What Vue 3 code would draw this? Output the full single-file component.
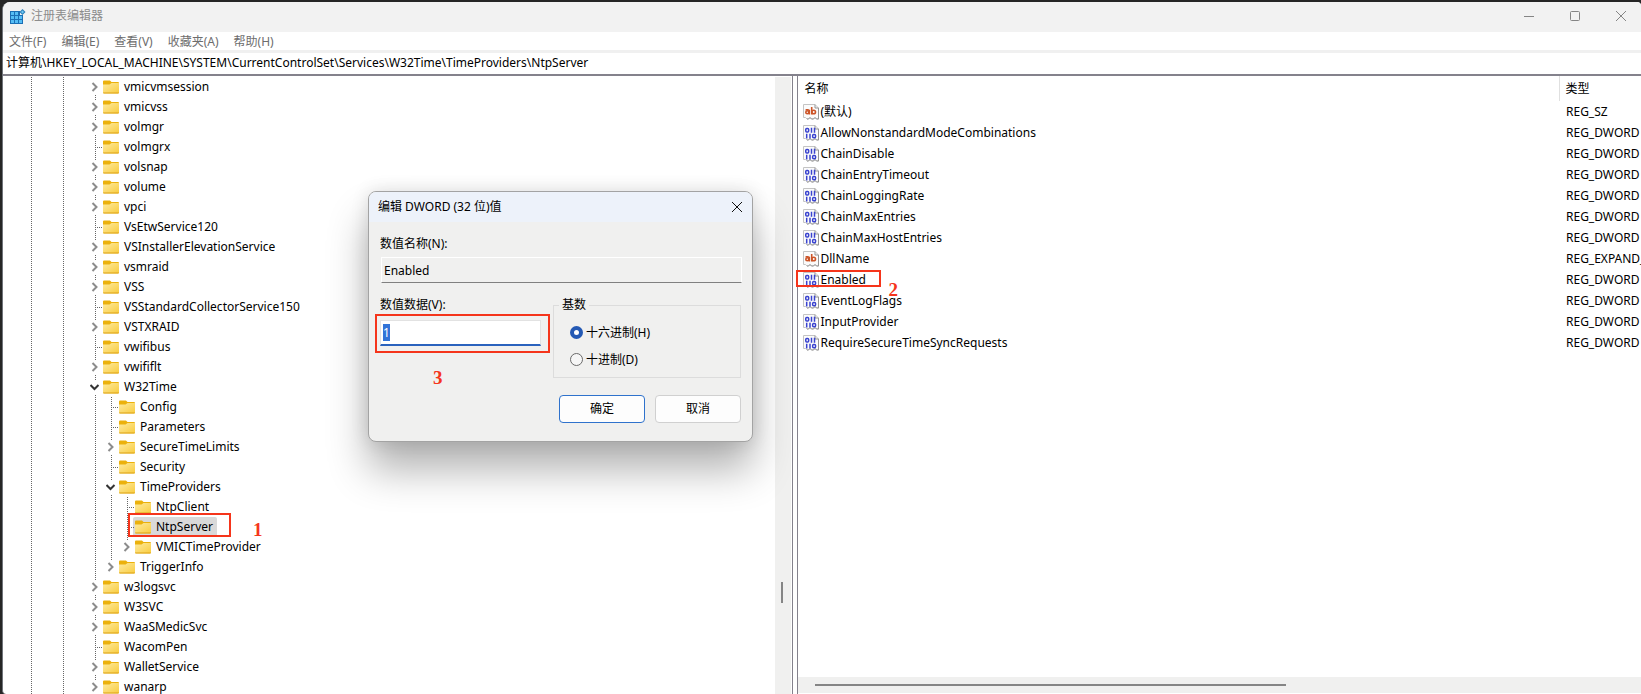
<script setup>
import { ref, onMounted } from 'vue'

const menus = ['文件(F)', '编辑(E)', '查看(V)', '收藏夹(A)', '帮助(H)']
const path = ref('计算机\\HKEY_LOCAL_MACHINE\\SYSTEM\\CurrentControlSet\\Services\\W32Time\\TimeProviders\\NtpServer')

// state: c = collapsed, o = open, '' = leaf
const n = (name, state = 'c', level = 0, extra = {}) => ({ name, state, level, ...extra })
const tree = [
  n('vmicvmsession'), n('vmicvss'), n('volmgr'), n('volmgrx', ''), n('volsnap'), n('volume'), n('vpci'),
  n('VsEtwService120', ''), n('VSInstallerElevationService'), n('vsmraid'), n('VSS'),
  n('VSStandardCollectorService150', ''), n('VSTXRAID'), n('vwifibus', ''), n('vwififlt'),
  n('W32Time', 'o'),
  n('Config', '', 1), n('Parameters', '', 1), n('SecureTimeLimits', 'c', 1), n('Security', '', 1),
  n('TimeProviders', 'o', 1),
  n('NtpClient', '', 2), n('NtpServer', '', 2, { selected: true }), n('VMICTimeProvider', 'c', 2, { last: true }),
  n('TriggerInfo', 'c', 1, { last: true }),
  n('w3logsvc'), n('W3SVC'), n('WaaSMedicSvc'), n('WacomPen', ''), n('WalletService'), n('wanarp')
]

const values = [
  ['(默认)', 'REG_SZ'],
  ['AllowNonstandardModeCombinations', 'REG_DWORD'],
  ['ChainDisable', 'REG_DWORD'],
  ['ChainEntryTimeout', 'REG_DWORD'],
  ['ChainLoggingRate', 'REG_DWORD'],
  ['ChainMaxEntries', 'REG_DWORD'],
  ['ChainMaxHostEntries', 'REG_DWORD'],
  ['DllName', 'REG_EXPAND_SZ'],
  ['Enabled', 'REG_DWORD'],
  ['EventLogFlags', 'REG_DWORD'],
  ['InputProvider', 'REG_DWORD'],
  ['RequireSecureTimeSyncRequests', 'REG_DWORD']
]

const data = ref('1')
const base = ref('hex')
const dataInput = ref(null)
onMounted(() => {
  dataInput.value.focus()
  dataInput.value.select()
})
</script>

<template>
  <div class="desktop">
    <main class="window">
      <header class="titlebar">
        <svg class="app-icon" width="16" height="16" viewBox="0 0 16 16" aria-hidden="true">
          <path d="M0 2h10v4h3v9H0z" fill="#1b6fb5" />
          <path d="M1 3h3v3H1zM5 3h3v3H5zM1 7h3v3H1zM5 7h3v3H5zM9 7h3v3H9zM1 11h3v3H1zM5 11h3v3H5zM9 11h3v3H9z" fill="#55bdf5" />
          <path d="M12.500 0L15.500 3L12.500 6L9.500 3z" fill="#2b7fb8" />
          <path d="M12.500 1.500L14 3L12.500 4.500L11 3z" fill="#6cc8f5" />
        </svg>
        <h1>注册表编辑器</h1>
        <div class="controls">
          <button aria-label="最小化"><svg width="10" height="10" viewBox="0 0 10 10"><path d="M0 5.500h10" /></svg></button>
          <button aria-label="最大化"><svg width="10" height="10" viewBox="0 0 10 10"><rect x=".5" y=".5" width="9" height="9" rx="1" /></svg></button>
          <button aria-label="关闭"><svg width="10" height="10" viewBox="0 0 10 10"><path d="M0 0l10 10M10 0L0 10" /></svg></button>
        </div>
      </header>
      <nav class="menubar">
        <button v-for="m in menus" :key="m">{{ m }}</button>
      </nav>
      <div class="address"><input v-model="path" aria-label="地址" /></div>

      <div class="panes">
        <section class="tree-pane">
          <ul class="tree">
            <li v-for="t in tree" :key="t.name">
              <span class="cell line"></span><span class="cell"></span><span class="cell line"></span><span class="cell"></span>
              <span v-for="i in t.level" :key="i" class="cell line"></span>
              <span v-if="!t.state" class="cell line leaf"></span>
              <span v-else class="cell branch" :class="{ last: t.last, first: t.name === 'vmicvmsession' }">
                <button class="toggle" :aria-label="t.name" :aria-expanded="t.state === 'o'">
                  <svg v-if="t.state === 'c'" width="10" height="10" viewBox="0 0 10 10"><path d="M2.500 1l4 4-4 4" stroke="#8c8c8c" /></svg>
                  <svg v-else width="10" height="10" viewBox="0 0 10 10"><path d="M.5 3l4 4 4-4" stroke="#333" /></svg>
                </button>
              </span>
              <span class="node" :class="{ selected: t.selected }">
                <svg class="folder" width="16" height="14" viewBox="0 0 16 14" aria-hidden="true">
                  <defs>
                    <linearGradient id="fold" x1="0" y1="0" x2="1" y2="1">
                      <stop offset="0" stop-color="#fdeaa0" /><stop offset="1" stop-color="#f9cc3e" />
                    </linearGradient>
                  </defs>
                  <path d="M0 1.500Q0 .5 1 .5h6l1.500 1.500H15q1 0 1 1V8H0z" fill="#ebb10c" />
                  <path d="M0 4.500h6.500L8.500 3H16v9.500q0 1-1 1H1q-1 0-1-1z" fill="url(#fold)" />
                  <path d="M0 12.500q0 1 1 1h14q1 0 1-1z" fill="#dba216" />
                </svg>
                <span>{{ t.name }}</span>
              </span>
              <span v-if="t.selected" class="mark mark-key"></span>
              <b v-if="t.selected" class="num num-key">1</b>
            </li>
          </ul>
          <div class="vscroll"><span class="vthumb"></span></div>
        </section>

        <section class="value-pane">
          <table>
            <thead>
              <tr><th class="name-col">名称</th><th class="type-col">类型</th></tr>
            </thead>
            <tbody>
              <tr v-for="v in values" :key="v[0]">
                <td>
                  <div class="value">
                    <svg width="16" height="16" viewBox="0 0 16 16" aria-hidden="true">
                      <path d="M.5.5h11.500l3.500 3.500v11h-2l-1.500-1.500-1.500 1.500H8.500L7 13.500 5.500 15H4l-1.500-1.500H.5z" fill="#fbfbfb" stroke="#c4c4c4" />
                      <path d="M12 .5V4h3.500M15.500 4v11h-2l-1.500-1.500-1.500 1.500H8.500L7 13.500 5.500 15H4" fill="none" stroke="#959595" />
                      <g v-if="v[1] !== 'REG_DWORD'" fill="none" stroke="#cc5427" stroke-width="1.600">
                        <circle cx="4.300" cy="8.300" r="1.500" /><path d="M6.300 6v4.500M2.600 5.800h2.200q1.500 0 1.500 1.500M8.700 3v7.500" /><circle cx="10.700" cy="8" r="1.800" />
                      </g>
                      <g v-else fill="none" stroke="#3a43cf" stroke-width="1.500">
                        <rect x="2.750" y="3.550" width="2.900" height="3.400" rx="1" /><path d="M8.500 2.800v4.900M11.500 2.800v4.900M3.700 8.800v4.700M7 8.800v4.700" /><rect x="9.650" y="9.550" width="2.900" height="3.200" rx="1" />
                      </g>
                    </svg>
                    <span>{{ v[0] }}</span>
                    <span v-if="v[0] === 'Enabled'" class="mark mark-value"></span>
                    <b v-if="v[0] === 'Enabled'" class="num num-value">2</b>
                  </div>
                </td>
                <td class="type">{{ v[1] }}</td>
              </tr>
            </tbody>
          </table>
          <div class="hscroll"><span class="hthumb"></span></div>
        </section>
      </div>
    </main>

    <form class="dialog" role="dialog" aria-labelledby="dlg-title" @submit.prevent>
      <header>
        <h2 id="dlg-title">编辑 DWORD (32 位)值</h2>
        <button type="button" class="close" aria-label="关闭"><svg width="10" height="10" viewBox="0 0 10 10"><path d="M0 0l10 10M10 0L0 10" /></svg></button>
      </header>
      <div class="body">
        <label for="vname">数值名称(N):</label>
        <input id="vname" class="field readonly" value="Enabled" readonly />
        <div class="columns">
          <div class="data">
            <label for="vdata">数值数据(V):</label>
            <div class="data-box">
              <input id="vdata" ref="dataInput" v-model="data" class="field" />
              <span class="mark mark-data"></span>
            </div>
            <b class="num num-data">3</b>
          </div>
          <fieldset>
            <legend>基数</legend>
            <label class="radio"><input v-model="base" type="radio" name="base" value="hex" />十六进制(H)</label>
            <label class="radio"><input v-model="base" type="radio" name="base" value="dec" />十进制(D)</label>
          </fieldset>
        </div>
        <div class="actions">
          <button class="primary">确定</button>
          <button type="button">取消</button>
        </div>
      </div>
    </form>
  </div>
</template>

<style>
html, body, #app { height: 100%; }
body { margin: 0; overflow: hidden; }
</style>

<style scoped>
* { box-sizing: border-box; }
.desktop {
  position: relative;
  height: 100%;
  padding: 2px 0 0 2px;
  background: #262626;
  overflow: hidden;
  font: 12px/20px "Noto Sans", "Noto Sans CJK SC", sans-serif;
  color: #000;
}
button, input { font: inherit; color: inherit; }
.window {
  display: flex;
  flex-direction: column;
  height: 100%;
  background: #fff;
  border-left: 1px solid #70747a;
  border-radius: 8px 4px 0 4px;
  overflow: hidden;
}
.titlebar {
  display: flex;
  flex: none;
  align-items: center;
  height: 30px;
  padding-left: 7px;
  background: #f2f2f2;
  color: #8c8c8c;
}
.titlebar h1 { margin: 0 0 2px 5px; font-size: 12px; font-weight: 400; }
.app-icon { display: block; }
.controls { display: flex; margin: 0 -3px 2px auto; }
.controls button, .close {
  display: grid;
  place-items: center;
  width: 46px;
  height: 28px;
  padding: 0;
  border: 0;
  background: none;
}
.controls svg, .close svg { fill: none; stroke: #858585; }
.close svg { stroke: #111; }
.menubar { display: flex; flex: none; height: 18px; padding-left: 6px; gap: 15px; }
.menubar button { height: 20px; padding: 0; border: 0; background: none; line-height: 20px; color: #6d6d6d; }
.address { flex: none; height: 26px; border-top: 3px solid #f0f0f0; border-bottom: 2px solid #84828c; }
.address input { display: block; width: 100%; height: 20px; padding: 0 3px; border: 0; outline: 0; background: none; }

.panes { display: flex; flex: 1; min-height: 0; }
.tree-pane { display: flex; flex: 0 0 48.2%; min-width: 0; padding-top: 1px; border-right: 1px solid #84828c; }
.tree { flex: 1; margin: 0; padding: 0 0 0 20px; list-style: none; overflow: hidden; }
.tree li { position: relative; display: flex; height: 20px; }
.cell { position: relative; flex: none; width: 16px; height: 20px; }
.line { background: repeating-linear-gradient(#666 0 1px, transparent 1px 2px) 8px 0 / 1px 100% no-repeat; }
.leaf {
  background:
    repeating-linear-gradient(#666 0 1px, transparent 1px 2px) 8px 0 / 1px 100% no-repeat,
    repeating-linear-gradient(90deg, #666 0 1px, transparent 1px 2px) 8px 10px / 8px 1px no-repeat;
}
.branch {
  background:
    repeating-linear-gradient(#666 0 1px, transparent 1px 2px) 8px 0 / 1px 3px no-repeat,
    repeating-linear-gradient(#666 0 1px, transparent 1px 2px) 8px 18px / 1px 2px no-repeat;
}
.branch.last { background: repeating-linear-gradient(#666 0 1px, transparent 1px 2px) 8px 0 / 1px 3px no-repeat; }
.branch.first { background: repeating-linear-gradient(#666 0 1px, transparent 1px 2px) 8px 18px / 1px 2px no-repeat; }
.toggle { display: grid; place-items: center; width: 16px; height: 20px; padding: 0; border: 0; background: none; }
.toggle path { fill: none; stroke-width: 2; }
.node { display: flex; align-items: center; gap: 5px; margin-left: -2px; padding: 0 4px 0 2px; border-radius: 2px; white-space: nowrap; }
.node.selected { background: #d9d9d9; }
.folder { flex: none; }
.vscroll { flex: none; width: 16px; margin-right: 1px; padding: 505px 6px 0; background: #f0f0ef; }
.vthumb { display: block; width: 2px; height: 21px; background: #858585; }

.value-pane { display: flex; flex: 1; flex-direction: column; min-width: 0; margin-left: 4px; border-left: 1px solid #84828c; }
table { width: 100%; border-collapse: collapse; table-layout: fixed; }
th { height: 25px; padding: 0 7px; text-align: left; font-weight: 400; }
.type-col { width: 82px; padding: 0 6px; border-left: 1px solid #e0e0e0; }
td { height: 21px; padding: 0; white-space: nowrap; }
.type { padding-left: 7px; overflow: hidden; }
.value { position: relative; display: flex; align-items: center; gap: 2px; height: 21px; padding-left: 5px; }
.hscroll { height: 16px; margin: auto 0 1px; padding: 7px 0 0 17px; background: #f0f0ef; }
.hthumb { display: block; width: 57%; height: 2px; background: #858585; }

.mark { position: absolute; border: 2px solid #f5351b; pointer-events: none; }
.num { position: absolute; font: 700 19px/20px "Liberation Serif", serif; color: #f5351b; }
.mark-key { left: 105px; top: -4px; width: 103px; height: 24px; }
.num-key { left: 230px; top: 3px; }
.mark-value { left: -2px; top: 1px; width: 85px; height: 17px; }
.num-value { left: 91px; top: 11px; }
.mark-data { inset: -6px -9px -7px -5px; }
.num-data { left: 53px; top: 73px; }

.dialog {
  position: absolute;
  left: 368px;
  top: 191px;
  width: 385px;
  border: 1px solid #a3a3a3;
  border-radius: 8px;
  background: #f0f0ef;
  box-shadow: 0 28px 40px rgba(0, 0, 0, .3), 0 0 18px rgba(0, 0, 0, .12);
}
.dialog header { display: flex; align-items: center; justify-content: space-between; height: 30px; padding-left: 9px; border-radius: 7px 7px 0 0; background: #edf2fa; }
.dialog h2 { margin: 0; font-size: 12px; font-weight: 400; }
.dialog .close { width: 31px; }
.body { padding: 12px 11px 18px; }
.body label { display: block; }
.field {
  display: block;
  width: 100%;
  height: 26px;
  padding: 0 2px;
  border: 1px solid #e2e2e2;
  border-bottom: 2px solid #2a62bd;
  outline: 0;
  background: #fff;
}
.field::selection { background: #3274d8; color: #fff; }
.readonly { margin: 3px 0 12px 1px; width: 361px; border: 1px solid #fff; border-bottom: 1px solid #808080; background: #f0f0ef; }
.columns { display: flex; gap: 12px; }
.data { position: relative; width: 161px; }
.data-box { position: relative; margin-top: 5px; }
fieldset { flex: 1; height: 83px; margin: 0; padding: 4px 8px 0 16px; border: 1px solid #dcdcdc; min-width: 0; }
legend { margin-left: -11px; padding: 0 3px; }
.radio { display: flex !important; align-items: center; gap: 3px; height: 27px; }
.radio input { appearance: none; width: 13px; height: 13px; margin: 0; border: 1px solid #6a6a6a; border-radius: 50%; background: #f6f6f6; }
.radio input:checked { border: 4px solid #2459b4; background: #fff; }
.actions { display: flex; justify-content: flex-end; gap: 10px; margin-top: 17px; }
.actions button { width: 86px; height: 28px; padding: 0; border: 1px solid #d0d0d0; border-radius: 4px; background: #fdfdfd; }
.actions .primary { border-color: #2f72cc; }
</style>
